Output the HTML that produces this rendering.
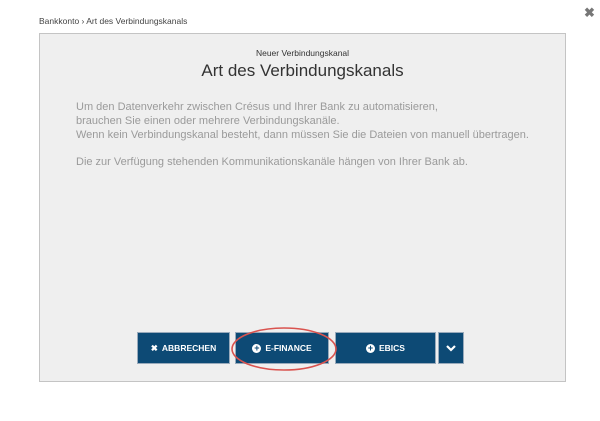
<!DOCTYPE html><html><head><style>
body{margin:0;width:600px;height:421px;background:#fff;font-family:"Liberation Sans",sans-serif;position:relative;overflow:hidden}
.a{position:absolute}
.bc{left:39px;top:16px;font-size:8.5px;color:#444}
.x{left:584px;top:5px;font-size:13px;color:#777;font-weight:bold}
.p{left:39px;top:33px;width:525px;height:347px;background:#efefef;border:1px solid #c4c4c4}
.t{color:#9a9a9a;font-size:11px;line-height:14px;left:76px}
.b{position:absolute;top:333px;height:30px;background:#0d4a75;color:#fff;font-size:8.5px;font-weight:bold;display:flex;align-items:center;justify-content:center;box-shadow:0 0 0 1px #9ab}
.c{display:inline-block;width:9px;height:9px;border-radius:50%;background:#fff;color:#0d4a75;font-size:9px;line-height:9px;text-align:center;margin-right:4px;font-weight:bold}
</style></head><body>
<div class="a bc">Bankkonto › Art des Verbindungskanals</div>
<div class="a x">✖</div>
<div class="a p"></div>
<div class="a" style="left:39px;width:527px;top:48px;text-align:center;font-size:8.5px;color:#333">Neuer Verbindungskanal</div>
<div class="a" style="left:39px;width:527px;top:61px;text-align:center;font-size:17px;color:#333">Art des Verbindungskanals</div>
<div class="a t" style="top:100px">Um den Datenverkehr zwischen Crésus und Ihrer Bank zu automatisieren,<br>brauchen Sie einen oder mehrere Verbindungskanäle.<br>Wenn kein Verbindungskanal besteht, dann müssen Sie die Dateien von manuell übertragen.</div>
<div class="a t" style="top:155px">Die zur Verfügung stehenden Kommunikationskanäle hängen von Ihrer Bank ab.</div>
<div class="b" style="left:138px;width:91px"><span style="margin-right:4px">✖</span>ABBRECHEN</div>
<div class="b" style="left:236px;width:92px"><span class="c">+</span>E-FINANCE</div>
<div class="b" style="left:336px;width:99px"><span class="c">+</span>EBICS</div>
<div class="b" style="left:439px;width:24px"><svg width="10" height="7" viewBox="0 0 10 7"><path d="M1 1l4 4 4-4" stroke="#fff" stroke-width="2.2" fill="none"/></svg></div>
<svg class="a" style="left:228px;top:325px" width="112" height="50"><ellipse cx="56" cy="24" rx="52" ry="21" fill="none" stroke="#d9534f" stroke-width="1.6"/></svg>
</body></html>
